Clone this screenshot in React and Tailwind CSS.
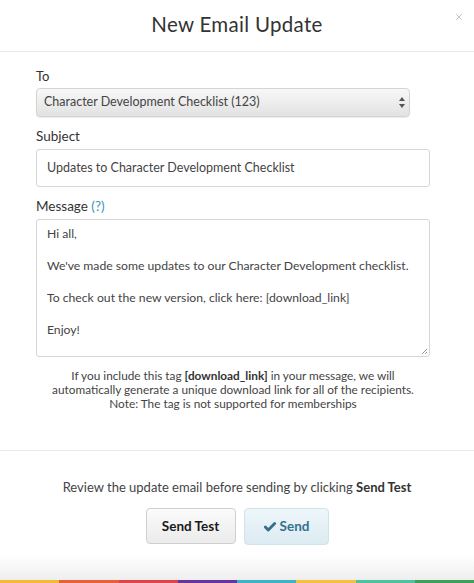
import { Check, X } from "lucide-react";

const stripes = [
  "bg-[#f2bd35]",
  "bg-[#e8603b]",
  "bg-[#de4448]",
  "bg-[#64369c]",
  "bg-[#3fb2c6]",
  "bg-[#f2c23c]",
  "bg-[#4dc29f]",
  "bg-[#3f9e5c]",
];

export default function App() {
  return (
    <div className="w-[474px] h-[583px] bg-white flex flex-col text-[#3a3a3a] font-['Lato',sans-serif] overflow-hidden">
      {/* header */}
      <div className="relative h-[52px] border-b border-[#e8e8e8] flex items-center justify-center">
        <h1 className="text-[20.5px] text-[#333] tracking-[0.3px] -mt-[3px]">New Email Update</h1>
        <X size={10} strokeWidth={2} className="absolute right-[10px] top-[12px] text-[#b8b8b8]" />
      </div>

      {/* body */}
      <div className="px-[36px] pt-[16px] pr-[44px] flex flex-col">
        <label className="text-[13px] text-[#333] leading-[16px]">To</label>
        <div className="mt-[4px] w-[374px] h-[29px] rounded-[4px] border border-[#d4d4d4] bg-gradient-to-b from-[#f8f8f8] to-[#e2e2e2] shadow-[0_1px_1px_rgba(0,0,0,0.08)] flex items-center justify-between pl-[7px] pr-[4px]">
          <span className="text-[12.5px] text-[#444]">Character Development Checklist (123)</span>
          <svg width="6" height="11" viewBox="0 0 6 11" className="text-[#555]">
            <path d="M3 0 L6 4 L0 4 Z" fill="currentColor" />
            <path d="M3 11 L6 7 L0 7 Z" fill="currentColor" />
          </svg>
        </div>

        <label className="mt-[11px] text-[13.5px] text-[#333] leading-[16px]">Subject</label>
        <div className="mt-[5px] h-[38px] rounded-[3px] border border-[#d6d6d6] bg-white flex items-center px-[10px]">
          <span className="text-[12.5px] text-[#444]">Updates to Character Development Checklist</span>
        </div>

        <label className="mt-[11px] text-[13.5px] text-[#333] leading-[16px]">
          Message <span className="text-[#3f93b8]">(?)</span>
        </label>
        <div className="relative mt-[5px] h-[138px] rounded-[3px] border border-[#d6d6d6] bg-white px-[10px] pt-[6px] text-[12.2px] text-[#444] leading-[16px] flex flex-col gap-[16px]">
          <p>Hi all,</p>
          <p>We've made some updates to our Character Development checklist.</p>
          <p>To check out the new version, click here: [download_link]</p>
          <p>Enjoy!</p>
          <svg width="7" height="7" viewBox="0 0 7 7" className="absolute right-[1px] bottom-[1px] text-[#999]">
            <path d="M6 1 L1 6 M6 4 L4 6" stroke="currentColor" strokeWidth="1" />
          </svg>
        </div>

        <p className="mt-[12px] text-center text-[11.8px] text-[#444] leading-[14px]">
          If you include this tag <b className="text-[#333]">[download_link]</b> in your message, we will
          <br />
          automatically generate a unique download link for all of the recipients.
          <br />
          Note: The tag is not supported for memberships
        </p>
      </div>

      {/* footer */}
      <div className="mt-auto border-t border-[#e8e8e8] flex flex-col items-center pt-[27px]">
        <p className="text-[13px] text-[#444]">
          Review the update email before sending by clicking <b className="text-[#333]">Send Test</b>
        </p>
        <div className="mt-[11px] flex gap-[8px]">
          <button className="w-[90px] h-[36px] rounded-[4px] border border-[#cfcfcf] bg-gradient-to-b from-[#fbfbfb] to-[#ebebeb] text-[13.5px] font-bold text-[#1a1a1a]">
            Send Test
          </button>
          <button className="w-[85px] h-[37px] rounded-[4px] border border-[#d2e2ea] bg-gradient-to-b from-[#eef6fa] to-[#dcebf2] text-[13.5px] font-bold text-[#35708d] flex items-center justify-center gap-[3px]">
            <Check size={14} strokeWidth={5} />
            Send
          </button>
        </div>
        <div className="mt-[10px] w-full h-[25px] bg-gradient-to-b from-white to-[#eeeeee]" />
      </div>
      <div className="flex h-[3px]">
        {stripes.map((c) => (
          <div key={c} className={`flex-1 ${c}`} />
        ))}
      </div>
    </div>
  );
}
